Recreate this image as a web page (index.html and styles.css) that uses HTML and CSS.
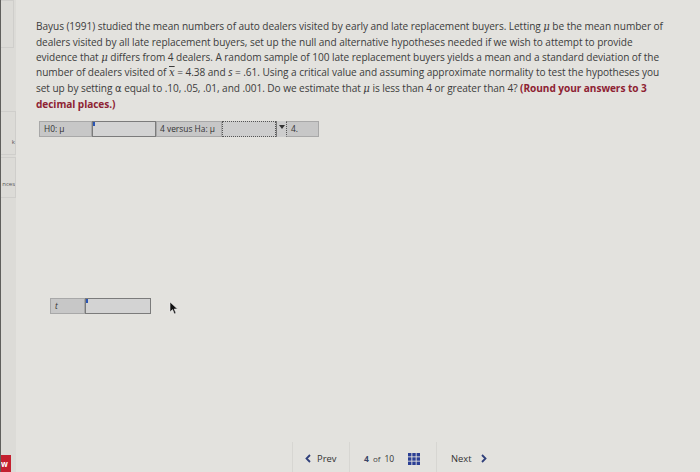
FILE: index.html
```html
<!DOCTYPE html>
<html>
<head>
<meta charset="utf-8">
<link rel="stylesheet" href="styles.css">
</head>
<body>
<div class="page">
  <aside class="side">
    <div class="side-box top"></div>
    <div class="side-box k"><span>k</span></div>
    <div class="side-box nces"><span>nces</span></div>
    <div class="side-fill"></div>
    <div class="side-red">w</div>
  </aside>
  <main class="main">
    <p class="question">Bayus (1991) studied the mean numbers of auto dealers visited by early and late replacement buyers. Letting <i class="mu">μ</i> be the mean number of<br>dealers visited by all late replacement buyers, set up the null and alternative hypotheses needed if we wish to attempt to provide<br>evidence that <i class="mu">μ</i> differs from 4 dealers. A random sample of 100 late replacement buyers yields a mean and a standard deviation of the<br>number of dealers visited of <span class="xbar">x</span> = 4.38 and <i>s</i> = .61. Using a critical value and assuming approximate normality to test the hypotheses you<br>set up by setting <span class="alpha">α</span> equal to .10, .05, .01, and .001. Do we estimate that <i class="mu">μ</i> is less than 4 or greater than 4? <b class="red">(Round your answers to 3<br>decimal places.)</b></p>

    <div class="hyp-row">
      <div class="cell c-h0">H0: μ</div>
      <div class="input c-in1"><span class="caret"></span></div>
      <div class="cell c-vs">4 versus Ha: μ</div>
      <div class="select"><div class="sel-field"></div><div class="sel-arrow"><svg width="6" height="4" viewBox="0 0 6 4"><path d="M0 0H6L3 4Z" fill="#333"/></svg></div></div>
      <div class="cell c-4">4.</div>
    </div>

    <div class="t-row">
      <div class="cell c-t"><i>t</i></div>
      <div class="input c-in2"><span class="caret"></span></div>
      <svg class="pointer" width="10" height="14" viewBox="0 0 10 14"><path d="M1 1L1 11L3.5 8.6L5.4 13L7 12.3L5.2 8L8.5 8Z" fill="#111" stroke="#eee" stroke-width="0.6"/></svg>
    </div>

    <nav class="nav">
      <div class="nav-btn prev"><svg width="6" height="9" viewBox="0 0 6 9"><path d="M5 1L1.5 4.5L5 8" fill="none" stroke="#2f3f7a" stroke-width="1.8"/></svg><span>Prev</span></div>
      <div class="nav-mid"><span class="cur">4</span><span class="of">of</span><span class="tot">10</span>
        <svg class="grid" width="12" height="12" viewBox="0 0 12 12" fill="#2b3f94">
          <rect x="0" y="0" width="3.4" height="3.4"/><rect x="4.3" y="0" width="3.4" height="3.4"/><rect x="8.6" y="0" width="3.4" height="3.4"/>
          <rect x="0" y="4.3" width="3.4" height="3.4"/><rect x="4.3" y="4.3" width="3.4" height="3.4"/><rect x="8.6" y="4.3" width="3.4" height="3.4"/>
          <rect x="0" y="8.6" width="3.4" height="3.4"/><rect x="4.3" y="8.6" width="3.4" height="3.4"/><rect x="8.6" y="8.6" width="3.4" height="3.4"/>
        </svg>
      </div>
      <div class="nav-btn next"><span>Next</span><svg width="6" height="9" viewBox="0 0 6 9"><path d="M1 1L4.5 4.5L1 8" fill="none" stroke="#2f3f7a" stroke-width="1.8"/></svg></div>
    </nav>
  </main>
</div>
</body>
</html>
```

FILE: styles.css
```css
* { box-sizing: border-box; }
html, body { margin: 0; padding: 0; }
body {
  width: 700px;
  height: 472px;
  overflow: hidden;
  background: #e3e2de;
  font-family: "Open Sans", "Liberation Sans", sans-serif;
  color: #3a3a3a;
}
.page {
  display: flex;
  height: 472px;
}
.side {
  width: 16px;
  flex: none;
  display: flex;
  flex-direction: column;
  border-left: 1px solid #5f5f5c;
  background: #dcdbd7;
  font-size: 6px;
  color: #555;
}
.side-box {
  border: 1px solid #cfcecb;
  border-left: none;
  overflow: hidden;
  white-space: nowrap;
  direction: rtl;
}
.side-box.top { height: 48px; margin-right: 2px; }
.side-box.k { height: 44px; margin-top: 63px; padding-top: 26px; }
.side-box.nces { height: 41px; margin-top: 2px; padding-top: 22px; }
.side-fill { flex: 1; }
.side-red {
  height: 17px;
  width: 10px;
  background: #c4202f;
  color: #fff;
  font-size: 8px;
  font-weight: bold;
  line-height: 17px;
  overflow: hidden;
  direction: rtl;
  text-align: left;
}
.main {
  flex: 1;
  position: relative;
  padding-left: 20px;
  display: flex;
  flex-direction: column;
}
.question {
  margin: 19px 0 0 0;
  font-size: 10.1px;
  line-height: 14.8px;
  letter-spacing: -0.06px;
  color: #3c3c3c;
  white-space: nowrap;
}
.mu { font-style: italic; font-family: "DejaVu Serif", serif; }
.xbar { text-decoration: overline; font-family: "DejaVu Serif", serif; font-style: italic; }
.alpha { font-family: "DejaVu Sans", sans-serif; }
.red { color: #8e2333; font-weight: 700; }

.hyp-row {
  display: flex;
  margin-top: 9px;
  margin-left: 3px;
  height: 16px;
}
.cell {
  background: #c7c7c7;
  border: 1px solid #a8a8a8;
  font-size: 8.4px;
  line-height: 14px;
  padding-left: 4px;
  color: #333;
  white-space: nowrap;
}
.input {
  position: relative;
  background: #d3d3d3;
  border: 1.5px solid #7b7b7b;
}
.caret {
  position: absolute;
  left: 0;
  top: 0;
  width: 2px;
  height: 4px;
  background: #2a55b5;
}
.c-h0 { width: 53px; }
.c-in1 { width: 64px; }
.c-vs { width: 66px; padding-left: 3px; }
.select {
  display: flex;
  width: 64px;
}
.sel-field {
  flex: 1;
  background: #cdcdcd;
  border: 1px dotted #555;
}
.sel-arrow {
  width: 10px;
  background: #cdcdcd;
  border-left: 1px solid #777;
  display: flex;
  align-items: flex-start;
  justify-content: center;
  padding-top: 4px;
}
.c-4 { width: 33px; border-left: 1px dotted #555; }

.t-row {
  display: flex;
  align-items: flex-start;
  margin-top: 161px;
  margin-left: 14px;
  height: 16px;
}
.c-t { width: 35px; }
.c-in2 { width: 66px; height: 16px; }
.pointer { margin-left: 18px; margin-top: 3px; }

.nav {
  position: absolute;
  left: 276px;
  top: 442px;
  display: flex;
  height: 30px;
  font-size: 9.4px;
  color: #333;
}
.nav-btn {
  display: flex;
  align-items: center;
  gap: 6px;
  padding-top: 3px;
  border-left: 1px solid #d7d6d2;
}
.prev { width: 57px; padding-left: 12px; }
.next { width: 63px; padding-left: 14px; gap: 9px; }
.nav-mid {
  width: 87px;
  display: flex;
  align-items: center;
  padding-left: 14px;
  padding-top: 3px;
  border-left: 1px solid #d7d6d2;
  font-size: 8.5px;
}
.cur { font-weight: 700; color: #3a4566; }
.of { margin-left: 4px; color: #444; font-size: 8px; }
.tot { margin-left: 4px; }
.grid { margin-left: 14px; }
```
